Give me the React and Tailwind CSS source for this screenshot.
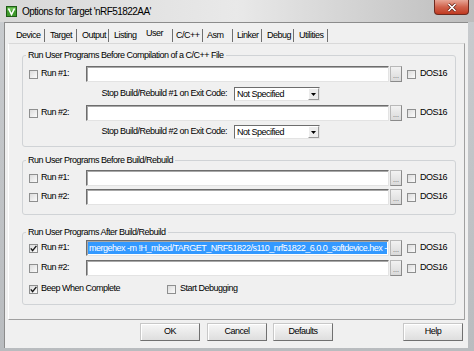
import React from "react";

const Check = ({ checked }) => (
  <span className="w-[9px] h-[9px] shrink-0 border border-[#8e8f8f] bg-gradient-to-br from-[#dcdcdc] to-[#fbfbfb] flex items-center justify-center">
    {checked && (
      <svg width="7" height="7" viewBox="0 0 7 7">
        <path d="M0.8 3.4 L2.6 5.6 L6.4 0.9" stroke="#151515" strokeWidth="1.4" fill="none" />
      </svg>
    )}
  </span>
);

const Browse = () => (
  <div className="ml-[1px] w-[12px] h-[16px] shrink-0 bg-gradient-to-b from-[#f2f2f2] to-[#dadada] border border-[#8a8a8a] border-t-[#b8b8b8] border-l-[#b8b8b8] flex items-end justify-center pb-[2px] text-[7px] leading-[6px] text-[#555] tracking-[0px]">
    ...
  </div>
);

const Field = ({ children }) => (
  <div className="w-[303px] h-[16px] shrink-0 bg-white border border-t-[#6d6d6d] border-l-[#6d6d6d] border-r-[#e3e3e3] border-b-[#e3e3e3] shadow-[inset_1px_1px_0_#a8a8a8] overflow-hidden whitespace-nowrap flex items-center pl-[1px] pr-[2px]">
    {children}
  </div>
);

const RunRow = ({ n, checked, value, cls }) => (
  <div className={cls}>
    <div className="flex items-center h-[16px] pl-[6px]">
      <Check checked={checked} />
      <span className="ml-[3px] w-[45px] shrink-0">Run #{n}:</span>
      <Field>
        {value ? (
          <span className="flex-1 bg-[#3399ff] text-white leading-[12px] pl-[1px]">{value}</span>
        ) : null}
      </Field>
      <Browse />
      <span className="ml-[5px]">
        <Check />
      </span>
      <span className="ml-[4px]">DOS16</span>
    </div>
  </div>
);

const StopRow = ({ n, cls }) => (
  <div className={cls}>
    <div className="flex items-center h-[14px]">
      <span className="w-[204px] text-right shrink-0">Stop Build/Rebuild #{n} on Exit Code:</span>
      <div className="ml-[7px] w-[86px] h-[14px] bg-white border border-t-[#6d6d6d] border-l-[#6d6d6d] border-r-[#e3e3e3] border-b-[#e3e3e3] flex items-center">
        <span className="pl-[2px] flex-1 leading-[12px]">Not Specified</span>
        <div className="w-[11px] h-[12px] bg-[#ececec] border border-[#9a9a9a] border-t-[#ffffff] border-l-[#ffffff] flex items-center justify-center">
          <svg width="5" height="3" viewBox="0 0 5 3">
            <path d="M0 0 L5 0 L2.5 3 Z" fill="#000" />
          </svg>
        </div>
      </div>
    </div>
  </div>
);

const Group = ({ title, cls, children }) => (
  <fieldset className={cls}>
    <legend className="ml-[3px] px-[2px] leading-[11px]">{title}</legend>
    {children}
  </fieldset>
);

const Btn = ({ label, cls }) => (
  <div className={cls}>
    <div className="w-[60px] h-[18px] flex items-center justify-center bg-gradient-to-b from-[#f6f6f6] to-[#dedede] border border-[#707070] border-t-[#c8c8c8] border-l-[#c8c8c8] shadow-[inset_1px_1px_0_#ffffff]">
      {label}
    </div>
  </div>
);

const Sep = () => <span className="block w-[1px] h-[13px] bg-[#6f6f6f]" />;

export default function App() {
  return (
    <div className="relative w-[474px] h-[351px] overflow-hidden bg-gradient-to-b from-[#c9cccf] to-[#b9bcbf] font-['Liberation_Sans',Arial,sans-serif] text-[9px] tracking-[-0.5px] text-black">
      {/* Title bar */}
      <div className="h-[22px] flex items-start bg-gradient-to-r from-[#d8d8d8] via-[#e9e9e9] to-[#bdbdbd]">
        <svg className="ml-[6px] mt-[6px]" width="11" height="11" viewBox="0 0 11 11">
          <rect x="0.5" y="0.5" width="10" height="10" fill="#3f9a2c" stroke="#1f5c16" />
          <rect x="1.5" y="1.5" width="8" height="3" fill="#6cc255" />
          <path d="M2.5 2.5 L5.5 8.5 L8.5 2.5" stroke="#ffffff" strokeWidth="1.6" fill="none" />
        </svg>
        <span className="ml-[5px] mt-[5px] text-[10px] leading-[13px] tracking-[-0.55px]">
          Options for Target 'nRF51822AA'
        </span>
        <div className="ml-auto mr-[5px] w-[35px] h-[15px] rounded-b-[4px] border border-[#6e2a1f] border-t-0 bg-gradient-to-b from-[#e7a596] via-[#d0624c] to-[#c0391f] flex items-center justify-center">
          <svg width="10" height="9" viewBox="0 0 10 9">
            <path d="M1.5 1 L8.5 8 M8.5 1 L1.5 8" stroke="#5a1a10" strokeWidth="3" />
            <path d="M1.5 1 L8.5 8 M8.5 1 L1.5 8" stroke="#ffffff" strokeWidth="1.7" />
          </svg>
        </div>
      </div>

      {/* Client area */}
      <div className="ml-[4px] w-[464px] h-[326px] bg-[#f0f0f0] border-l border-t border-[#8c8c8c] flex flex-col">
        {/* Tabs */}
        <div className="h-[20px] pt-[5px] flex items-start">
          <div className="h-[15px] flex items-center w-full">
            <span className="ml-[11px] w-[28px]">Device</span>
            <Sep />
            <span className="ml-[5px] w-[26px]">Target</span>
            <Sep />
            <span className="ml-[5px] w-[26px]">Output</span>
            <Sep />
            <span className="ml-[5px] w-[32px]">Listing</span>
            <span className="-mt-[3px] w-[26px]">User</span>
            <Sep />
            <span className="ml-[3px] w-[26px]">C/C++</span>
            <Sep />
            <span className="ml-[4px] w-[25px]">Asm</span>
            <Sep />
            <span className="ml-[4px] w-[24px]">Linker</span>
            <Sep />
            <span className="ml-[5px] w-[26px]">Debug</span>
            <Sep />
            <span className="ml-[5px] w-[28px]">Utilities</span>
            <Sep />
          </div>
        </div>

        {/* Tab page */}
        <div className="ml-[3px] w-[457px] h-[277px] border border-[#a0a0a0] border-t-[#d9d9d9] border-l-[#ffffff] bg-[#f0f0f0] flex flex-col">
          <Group
            title="Run User Programs Before Compilation of a C/C++ File"
            cls="mt-[6px] ml-[13px] w-[434px] h-[97px] border border-[#d0d3d6] rounded-[3px]"
          >
            <RunRow n={1} cls="mt-[5px]" />
            <StopRow n={1} cls="mt-[5px]" />
            <RunRow n={2} cls="mt-[4px]" />
            <StopRow n={2} cls="mt-[4px]" />
          </Group>

          <Group
            title="Run User Programs Before Build/Rebuild"
            cls="mt-[8px] ml-[13px] w-[434px] h-[60px] border border-[#d0d3d6] rounded-[3px]"
          >
            <RunRow n={1} cls="mt-[4px]" />
            <RunRow n={2} cls="mt-[3px]" />
          </Group>

          <Group
            title="Run User Programs After Build/Rebuild"
            cls="mt-[12px] ml-[13px] w-[434px] h-[78px] border border-[#d0d3d6] rounded-[3px]"
          >
            <RunRow
              n={1}
              checked
              cls="mt-[2px]"
              value="mergehex -m !H_mbed/TARGET_NRF51822/s110_nrf51822_6.0.0_softdevice.hex -"
            />
            <RunRow n={2} cls="mt-[4px]" />
            <div className="mt-[7px] h-[12px] pl-[6px] flex items-center">
              <Check checked />
              <span className="ml-[3px] w-[126px]">Beep When Complete</span>
              <Check />
              <span className="ml-[4px]">Start Debugging</span>
            </div>
          </Group>
        </div>

        {/* Buttons */}
        <div className="mt-[3px] flex">
          <Btn label="OK" cls="ml-[135px]" />
          <Btn label="Cancel" cls="ml-[7px]" />
          <Btn label="Defaults" cls="ml-[6px]" />
          <Btn label="Help" cls="ml-[70px]" />
        </div>
      </div>
    </div>
  );
}
